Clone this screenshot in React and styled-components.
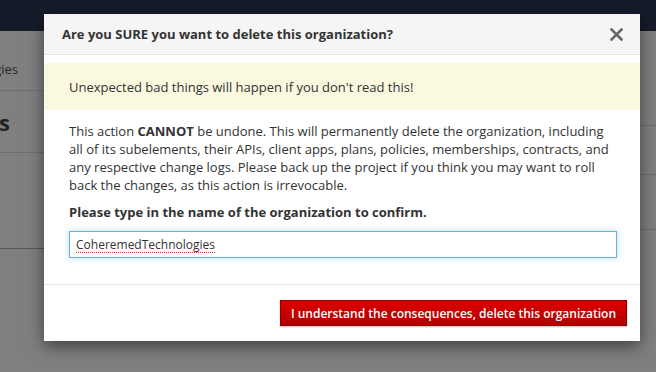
import React from 'react';
import styled, { createGlobalStyle } from 'styled-components';

const Global = createGlobalStyle`
    body{
        margin:0;
        font-family:"Open Sans", "Liberation Sans", sans-serif;
        color:#333;
    }
`;

const Page = styled.div`
    position:relative;
    width:656px;
    height:372px;
    overflow:hidden;
    background:#fff;
`;

const NavBar = styled.div`
    height:31px;
    background:#2a3752;
`;

const Content = styled.div`
    display:flex;
    justify-content:space-between;
`;

const Pane = styled.div`
    width:${({w}) => w}px;
    display:flex;
    flex-direction:column;
`;

const Row = styled.div`
    height:${({h}) => h}px;
    border-bottom:1px solid ${({dark}) => dark ? '#aaa' : '#ddd'};
    display:flex;
    align-items:center;
    padding-top:${({pt}) => pt || 0}px;
    box-sizing:border-box;
    overflow:hidden;
`;

const Clipped = styled.div`
    width:100%;
    direction:rtl;
    white-space:nowrap;
    overflow:hidden;
    padding-right:${({pr}) => pr}px;
    box-sizing:border-box;
    font-size:${({size}) => size}px;
    font-weight:${({bold}) => bold ? 700 : 400};
    color:${({bold}) => bold ? '#444' : '#555'};
`;

const Backdrop = styled.div`
    position:absolute;
    inset:0;
    background:rgba(0,0,0,0.5);
    display:flex;
    align-items:flex-start;
    padding:14px 0 0 44px;
`;

const Dialog = styled.div`
    width:596px;
    background:#fff;
    box-shadow:0 5px 15px rgba(0,0,0,0.5);
`;

const Header = styled.div`
    height:40px;
    background:#f5f5f5;
    border-bottom:1px solid #e5e5e5;
    display:flex;
    align-items:center;
    justify-content:space-between;
    padding:0 17px 0 18px;

    h4{
        margin:0;
        font-size:13px;
        font-weight:700;
        color:#333;
    }
`;

const Close = styled.button`
    border:0;
    background:none;
    padding:0;
    display:flex;
    cursor:pointer;
`;

const Alert = styled.div`
    margin-top:8px;
    height:47px;
    background:#faf8df;
    display:flex;
    align-items:center;
    padding-left:25px;
    font-size:13px;
    color:#333;
`;

const Body = styled.div`
    padding:12px 23px 26px 25px;
    font-size:13px;
    line-height:18px;

    p{
        margin:0;
    }
`;

const Label = styled.div`
    margin:9px 0 10px;
    font-weight:700;
`;

const NameInput = styled.input`
    display:block;
    width:100%;
    height:27px;
    box-sizing:border-box;
    border:1px solid #66afe9;
    box-shadow:0 0 6px rgba(102,175,233,0.45);
    outline:none;
    padding:0 6px;
    font-family:inherit;
    font-size:12px;
    color:#333;
    text-decoration:underline dotted #e0312e;
    text-underline-offset:3px;
`;

const Footer = styled.div`
    border-top:1px solid #e5e5e5;
    padding:15px 13px 15px;
    display:flex;
    justify-content:flex-end;
`;

const DangerButton = styled.button`
    height:26px;
    padding:0 10px;
    border:1px solid #8f0000;
    background:linear-gradient(#dc0000, #b30000);
    box-shadow:0 1px 2px rgba(0,0,0,0.25);
    color:#fff;
    font-family:"Open Sans", sans-serif;
    font-size:12px;
    font-weight:600;
    white-space:nowrap;
    cursor:pointer;
`;

function App() {
    return (
        <>
        <Global/>
        <Page>
            <NavBar/>
            <Content>
                <Pane w={44}>
                    <Row h={60} pt={16}><Clipped size={13} pr={26}>Coheremed Technologies</Clipped></Row>
                    <Row h={62}><Clipped size={22} pr={34} bold>Organizations</Clipped></Row>
                    <Row h={96} dark/>
                </Pane>
                <Pane w={16}>
                    <Row h={95}/>
                    <Row h={49}/>
                    <Row h={55}/>
                </Pane>
            </Content>
            <Backdrop>
                <Dialog>
                    <Header>
                        <h4>Are you SURE you want to delete this organization?</h4>
                        <Close aria-label="close">
                            <svg width="13" height="13" viewBox="0 0 13 13">
                                <path d="M1.5 1.5 L11.5 11.5 M11.5 1.5 L1.5 11.5" stroke="#666" strokeWidth="2.6" strokeLinecap="square"/>
                            </svg>
                        </Close>
                    </Header>
                    <Alert>Unexpected bad things will happen if you don't read this!</Alert>
                    <Body>
                        <p>
                            This action <b>CANNOT</b> be undone. This will permanently delete the organization, including<br/>
                            all of its subelements, their APIs, client apps, plans, policies, memberships, contracts, and<br/>
                            any respective change logs. Please back up the project if you think you may want to roll<br/>
                            back the changes, as this action is irrevocable.
                        </p>
                        <Label>Please type in the name of the organization to confirm.</Label>
                        <NameInput defaultValue="CoheremedTechnologies" spellCheck={false}/>
                    </Body>
                    <Footer>
                        <DangerButton>I understand the consequences, delete this organization</DangerButton>
                    </Footer>
                </Dialog>
            </Backdrop>
        </Page>
        </>
    )
}

export default App;
